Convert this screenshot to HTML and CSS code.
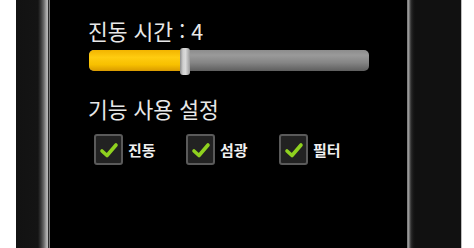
FILE: index.html
```html
<!DOCTYPE html>
<html lang="ko">
<head>
<meta charset="utf-8">
<link rel="stylesheet" href="styles.css">
</head>
<body>
<div class="frame">
  <div class="gap-white"></div>
  <div class="bezel-left"></div>
  <main class="screen">
    <div class="label label-time">진동 시간 : 4</div>
    <div class="slider">
      <div class="slider-fill" style="width: 96px"></div>
      <div class="slider-thumb" style="left: 91px"></div>
    </div>
    <div class="label label-func">기능 사용 설정</div>
    <div class="checks">
      <div class="check-item">
        <span class="box"><svg viewBox="0 0 20 20" width="20" height="20"><path d="M3 11 L8 15.5 L17 5" fill="none" stroke="#8fd11f" stroke-width="3.6" stroke-linecap="round" stroke-linejoin="round"/></svg></span>
        <span class="check-text">진동</span>
      </div>
      <div class="check-item">
        <span class="box"><svg viewBox="0 0 20 20" width="20" height="20"><path d="M3 11 L8 15.5 L17 5" fill="none" stroke="#8fd11f" stroke-width="3.6" stroke-linecap="round" stroke-linejoin="round"/></svg></span>
        <span class="check-text">섬광</span>
      </div>
      <div class="check-item">
        <span class="box"><svg viewBox="0 0 20 20" width="20" height="20"><path d="M3 11 L8 15.5 L17 5" fill="none" stroke="#8fd11f" stroke-width="3.6" stroke-linecap="round" stroke-linejoin="round"/></svg></span>
        <span class="check-text">필터</span>
      </div>
    </div>
  </main>
  <div class="bezel-right"></div>
  <div class="gap-white-right"></div>
</div>
</body>
</html>
```
FILE: styles.css
```css
html, body {
  margin: 0;
  padding: 0;
  background: #ffffff;
}
body {
  width: 474px;
  height: 248px;
  overflow: hidden;
  font-family: "Noto Sans CJK KR", "Noto Sans", sans-serif;
}
.frame {
  display: flex;
  height: 248px;
}
.gap-white {
  width: 16px;
  background: #fff;
}
.bezel-left {
  width: 34px;
  background: linear-gradient(to right,
    #121212 0px, #141414 22px, #3a3a3a 25px, #6e6e6e 28px, #a0a0a0 30px,
    #b4b4b4 31px, #b4b4b4 32px, #2a2a2a 32px, #2a2a2a 33px, #7a7a7a 33px, #7a7a7a 34px);
}
.screen {
  width: 357px;
  background: #000;
  padding: 0 0 0 38px;
  box-sizing: border-box;
  display: flex;
  flex-direction: column;
}
.bezel-right {
  width: 55px;
  background: linear-gradient(to right,
    #5a5a5a 0px, #a6a6a6 1px, #8a8a8a 2px, #555 3px, #2e2e2e 4px, #181818 6px,
    #111 8px, #111 54px, #bdbdbd 54px, #bdbdbd 55px);
}
.gap-white-right {
  flex: 1;
  background: #fff;
}
.label {
  color: #e8e8e8;
  font-size: 21.5px;
  line-height: 24px;
  white-space: nowrap;
}
.label-time {
  margin-top: 19px;
}
.slider {
  position: relative;
  width: 280px;
  height: 21px;
  margin-top: 7px;
  margin-left: 1px;
  border-radius: 5px;
  background: linear-gradient(to bottom, #8c8c8c 0%, #9a9a9a 25%, #858585 60%, #5e5e5e 100%);
}
.slider-fill {
  height: 100%;
  border-radius: 5px 0 0 5px;
  background: linear-gradient(to bottom, #f2b400 0%, #ffcc10 35%, #f7c000 70%, #d99a00 100%);
}
.slider-thumb {
  position: absolute;
  top: -2px;
  width: 10px;
  height: 27px;
  border-radius: 3px;
  background: linear-gradient(to right, #8a8a8a 0%, #cfcfcf 30%, #dadada 55%, #9a9a9a 100%);
}
.label-func {
  margin-top: 26px;
}
.checks {
  display: grid;
  grid-template-columns: 92px 93px auto;
  margin-top: 13px;
  margin-left: 6px;
}
.check-item {
  display: flex;
  align-items: center;
  gap: 5px;
}
.box {
  width: 25px;
  height: 27px;
  border: 2px solid #5a5a5a;
  border-radius: 3px;
  background: #222;
  display: flex;
  align-items: center;
  justify-content: center;
}
.check-text {
  color: #f0f0f0;
  font-size: 15px;
  font-weight: bold;
  line-height: 20px;
}
```
